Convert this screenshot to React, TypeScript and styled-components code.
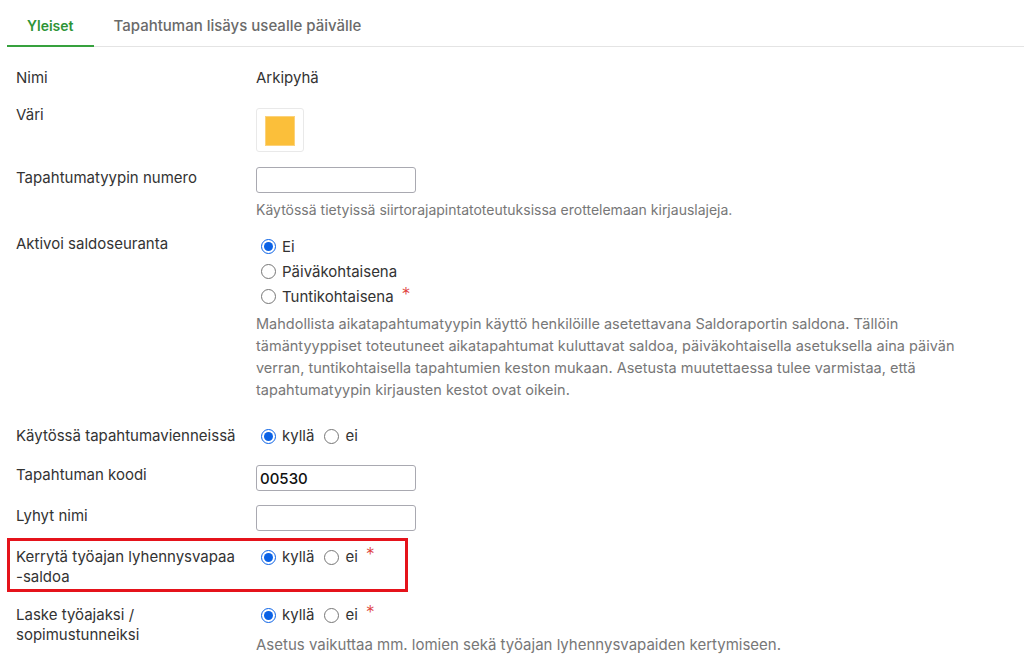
import React from "react";
import styled, { createGlobalStyle } from "styled-components";

const Global = createGlobalStyle`
  html, body { margin: 0; padding: 0; background: #fff; }
  body {
    font-family: Inter, "Noto Sans", "Liberation Sans", sans-serif;
    font-size: 15px;
    color: #333;
  }
  * { box-sizing: border-box; }
`;

const Page = styled.div`
  width: 1024px;
  height: 663px;
  overflow: hidden;
`;

const TabBar = styled.div`
  display: flex;
  margin-left: 7px;
  border-bottom: 1px solid #e4e4e4;
`;

const Tab = styled.div<{ $active?: boolean }>`
  padding: 16px 20px 9px;
  line-height: 20px;
  font-size: ${(p) => (p.$active ? 14 : 15)}px;
  font-weight: ${(p) => (p.$active ? 600 : 500)};
  color: ${(p) => (p.$active ? "#2e9436" : "#6a6a6a")};
  border-bottom: 2px solid ${(p) => (p.$active ? "#36a13e" : "transparent")};
  margin-bottom: -1px;
`;

const Form = styled.div`
  display: flex;
  flex-direction: column;
  padding-left: 16px;
`;

const Row = styled.div<{ $mt: number; $highlight?: boolean }>`
  display: grid;
  grid-template-columns: 240px 1fr;
  margin-top: ${(p) => p.$mt}px;
  ${(p) =>
    p.$highlight
      ? `
    width: 401px;
    margin-left: -9px;
    padding: 6px 0 2px 6px;
    border: 3px solid #e5131b;
  `
      : ""}
`;

const Label = styled.div<{ $pt?: number }>`
  line-height: 20px;
  color: #333;
  padding-top: ${(p) => p.$pt ?? 0}px;
  padding-right: 12px;
`;

const Value = styled.div`
  display: flex;
  flex-direction: column;
  align-items: flex-start;
  line-height: 20px;
`;

const Swatch = styled.div`
  margin-top: 3px;
  width: 48px;
  height: 44px;
  border: 1px solid #e9e9e9;
  border-radius: 3px;
  display: flex;
  align-items: center;
  justify-content: center;
`;

const SwatchColor = styled.div`
  width: 30px;
  height: 30px;
  background: #fbbf3a;
  border: 1px solid #fcd27a;
  margin-top: 1px;
`;

const TextInput = styled.input`
  width: 160px;
  height: 26px;
  border: 1px solid #a9a9b1;
  border-radius: 3px;
  padding: 0 3px;
  font-family: Inter, "Noto Sans", sans-serif;
  font-size: 15px;
  font-weight: 500;
  color: #111;
  outline: none;
`;

const Help = styled.div<{ $mt: number; $lh?: number; $fs?: number }>`
  margin-top: ${(p) => p.$mt}px;
  color: #777;
  font-size: ${(p) => p.$fs ?? 15}px;
  line-height: ${(p) => p.$lh ?? 20}px;
  max-width: 740px;
`;

const RadioList = styled.div`
  display: flex;
  flex-direction: column;
`;

const RadioInline = styled.div`
  display: flex;
  align-items: center;
  height: 20px;
`;

const Option = styled.label<{ $h?: number }>`
  display: inline-flex;
  align-items: center;
  height: ${(p) => p.$h ?? 20}px;
  color: #333;
  margin-right: 5px;
`;

const Radio = styled.input.attrs({ type: "radio" })`
  width: 15px;
  height: 15px;
  margin: 0 6px 0 5px;
  accent-color: #0b62e6;
`;

const Star = styled.span`
  color: #e0433f;
  font-size: 18px;
  font-weight: 300;
  margin-left: 8px;
  position: relative;
  top: -2px;
`;

export default function App() {
  return (
    <Page>
      <Global />
      <TabBar>
        <Tab $active>Yleiset</Tab>
        <Tab>Tapahtuman lisäys usealle päivälle</Tab>
      </TabBar>
      <Form>
        <Row $mt={21}>
          <Label>Nimi</Label>
          <Value>Arkipyhä</Value>
        </Row>
        <Row $mt={17}>
          <Label>Väri</Label>
          <Value>
            <Swatch>
              <SwatchColor />
            </Swatch>
          </Value>
        </Row>
        <Row $mt={15}>
          <Label $pt={1}>Tapahtumatyypin numero</Label>
          <Value>
            <TextInput defaultValue="" />
            <Help $mt={7} $fs={14}>
              Käytössä tietyissä siirtorajapintatoteutuksissa erottelemaan kirjauslajeja.
            </Help>
          </Value>
        </Row>
        <Row $mt={14}>
          <Label>Aktivoi saldoseuranta</Label>
          <Value>
            <RadioList>
              <Option $h={25}>
                <Radio name="saldo" defaultChecked />
                Ei
              </Option>
              <Option $h={25}>
                <Radio name="saldo" />
                Päiväkohtaisena
              </Option>
              <Option $h={25}>
                <Radio name="saldo" />
                Tuntikohtaisena
                <Star>*</Star>
              </Option>
            </RadioList>
            <Help $mt={4} $lh={22} $fs={14.5}>
              Mahdollista aikatapahtumatyypin käyttö henkilöille asetettavana Saldoraportin saldona. Tällöin
              tämäntyyppiset toteutuneet aikatapahtumat kuluttavat saldoa, päiväkohtaisella asetuksella aina päivän
              verran, tuntikohtaisella tapahtumien keston mukaan. Asetusta muutettaessa tulee varmistaa, että
              tapahtumatyypin kirjausten kestot ovat oikein.
            </Help>
          </Value>
        </Row>
        <Row $mt={25}>
          <Label>Käytössä tapahtumavienneissä</Label>
          <Value>
            <RadioInline>
              <Option>
                <Radio name="vienti" defaultChecked />
                kyllä
              </Option>
              <Option>
                <Radio name="vienti" />
                ei
              </Option>
            </RadioInline>
          </Value>
        </Row>
        <Row $mt={19}>
          <Label>Tapahtuman koodi</Label>
          <Value>
            <TextInput defaultValue="00530" />
          </Value>
        </Row>
        <Row $mt={14}>
          <Label $pt={1}>Lyhyt nimi</Label>
          <Value>
            <TextInput defaultValue="" />
          </Value>
        </Row>
        <Row $mt={7} $highlight>
          <Label>
            Kerrytä työajan lyhennysvapaa
            <br />
            -saldoa
          </Label>
          <Value>
            <RadioInline>
              <Option>
                <Radio name="kerryta" defaultChecked />
                kyllä
              </Option>
              <Option>
                <Radio name="kerryta" />
                ei
                <Star>*</Star>
              </Option>
            </RadioInline>
          </Value>
        </Row>
        <Row $mt={13}>
          <Label>
            Laske työajaksi /
            <br />
            sopimustunneiksi
          </Label>
          <Value>
            <RadioInline>
              <Option>
                <Radio name="laske" defaultChecked />
                kyllä
              </Option>
              <Option>
                <Radio name="laske" />
                ei
                <Star>*</Star>
              </Option>
            </RadioInline>
            <Help $mt={10}>
              Asetus vaikuttaa mm. lomien sekä työajan lyhennysvapaiden kertymiseen.
            </Help>
          </Value>
        </Row>
      </Form>
    </Page>
  );
}
